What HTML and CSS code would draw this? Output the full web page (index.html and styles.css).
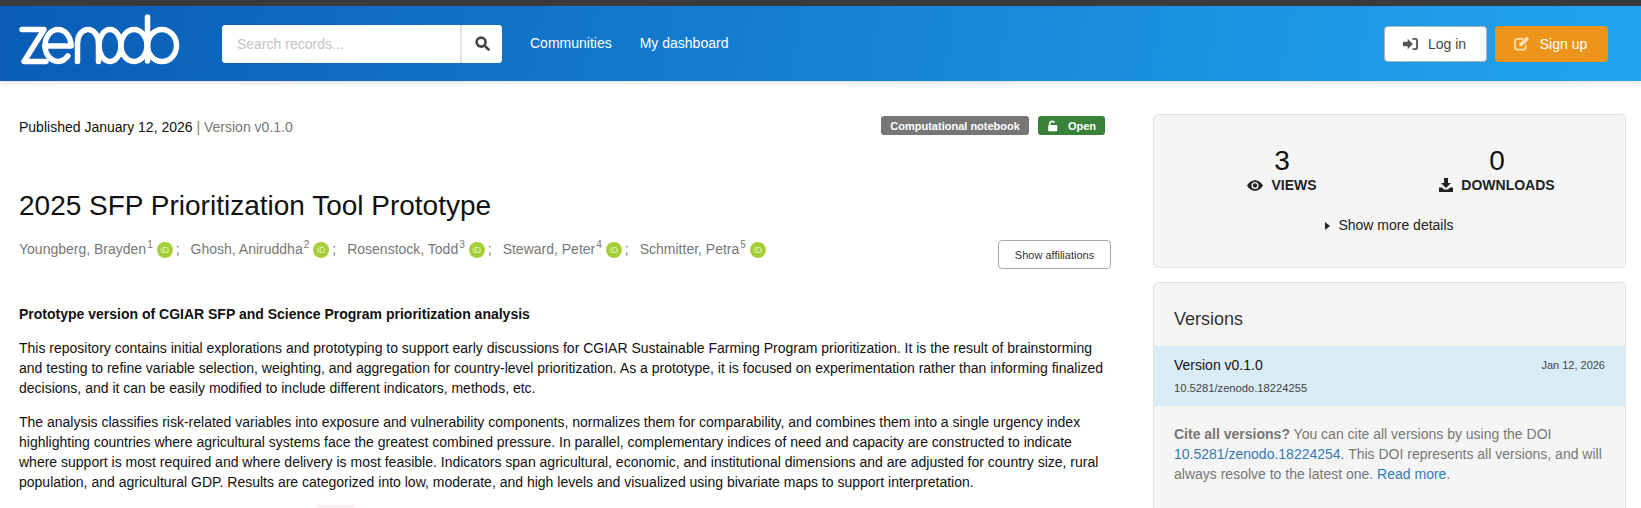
FILE: index.html
```html
<!DOCTYPE html>
<html>
<head>
    <title>2025 SFP Prioritization Tool Prototype</title>
    <link rel="stylesheet" href="styles.css">
</head>
<body>
    <header class="navbar">
        <svg class="logo" viewBox="16 12 168 56" fill="none" stroke="#fff" stroke-width="5.500" stroke-linecap="round" stroke-linejoin="round" aria-label="zenodo">
            <polyline points="22,28.500 44,28.500 24,60.500 46,60.500"/>
            <ellipse cx="58" cy="44.500" rx="13" ry="16" stroke-dasharray="0 11 80 0"/>
            <line x1="45" y1="45" x2="71" y2="45"/>
            <line x1="77.500" y1="42" x2="77.500" y2="60.500"/>
            <line x1="98.500" y1="42" x2="98.500" y2="60.500"/>
            <ellipse cx="88" cy="42" rx="10.500" ry="13.500" stroke-dasharray="0 38 38 0"/>
            <ellipse cx="110" cy="44.500" rx="11" ry="16"/>
            <ellipse cx="134" cy="44.500" rx="13" ry="16"/>
            <line x1="147.500" y1="16" x2="147.500" y2="60"/>
            <ellipse cx="162" cy="44.500" rx="14.500" ry="16"/>
        </svg>
        <form class="search">
            <input class="search-input" type="text" placeholder="Search records...">
            <button class="search-btn" type="button">
                <svg viewBox="0 0 16 16" width="15" height="15" fill="none" stroke="#444" stroke-width="2.800"><circle cx="6.500" cy="6.500" r="4.800"/><line x1="10.500" y1="10.500" x2="14.400" y2="14.400" stroke-linecap="round"/></svg>
            </button>
        </form>
        <nav class="nav-links">
            <a href="#">Communities</a>
            <a href="#">My dashboard</a>
        </nav>
        <div class="nav-right">
            <a class="btn btn-login" href="#">
                <svg viewBox="0 0 16 14" width="15" height="14" fill="#555"><path d="M0 4.500h5V1.500L10.500 7 5 12.500v-3H0z"/><path d="M10 .5h3a3 3 0 0 1 3 3v7a3 3 0 0 1-3 3h-3v-2h3a1 1 0 0 0 1-1v-7a1 1 0 0 0-1-1h-3z"/></svg>
                Log in
            </a>
            <a class="btn btn-signup" href="#">
                <svg viewBox="0 0 17 16" width="16" height="15" fill="none" stroke="#fde0b5" stroke-width="1.800"><path d="M12.500 9.500V12a2.500 2.500 0 0 1-2.500 2.500H3.500A2.500 2.500 0 0 1 1 12V5.500A2.500 2.500 0 0 1 3.500 3H10"/><path d="M5.500 11l.6-3.200L13.400.6l2.800 2.700-7.300 7.200z" fill="#fde0b5" stroke="none"/></svg>
                Sign up
            </a>
        </div>
    </header>

    <div class="page">
        <main class="record">
            <div class="record-top">
                <div class="published">Published January 12, 2026 <span class="muted">| Version v0.1.0</span></div>
                <div class="labels">
                    <span class="label label-grey">Computational notebook</span>
                    <span class="label label-green">
                        <svg viewBox="0 0 12 12" width="12" height="12" fill="#fff"><path d="M2 5V3.500a3.200 3.200 0 0 1 6.200-1l-1.600.5A1.600 1.600 0 0 0 3.600 3.500V5H9.500a.8.8 0 0 1 .8.8v4.600a.8.8 0 0 1-.8.8h-7.500a.8.8 0 0 1-.8-.8V5.800A.8.8 0 0 1 2 5z"/></svg>
                        Open
                    </span>
                </div>
            </div>
            <h1 class="title">2025 SFP Prioritization Tool Prototype</h1>
            <div class="creators-row">
                <div class="creators">
                    <span class="creator">Youngberg, Brayden<sup>1</sup><i class="orcid">iD</i>;</span>
                    <span class="creator">Ghosh, Aniruddha<sup>2</sup><i class="orcid">iD</i>;</span>
                    <span class="creator">Rosenstock, Todd<sup>3</sup><i class="orcid">iD</i>;</span>
                    <span class="creator">Steward, Peter<sup>4</sup><i class="orcid">iD</i>;</span>
                    <span class="creator">Schmitter, Petra<sup>5</sup><i class="orcid">iD</i></span>
                </div>
                <button class="btn-affil" type="button">Show affiliations</button>
            </div>
            <div class="description">
                <p><strong>Prototype version of CGIAR SFP and Science Program prioritization analysis</strong></p>
                <p>This repository contains initial explorations and prototyping to support early discussions for CGIAR Sustainable Farming Program prioritization. It is the result of brainstorming and testing to refine variable selection, weighting, and aggregation for country-level prioritization. As a prototype, it is focused on experimentation rather than informing finalized decisions, and it can be easily modified to include different indicators, methods, etc.</p>
                <p>The analysis classifies risk-related variables into exposure and vulnerability components, normalizes them for comparability, and combines them into a single urgency index highlighting countries where agricultural systems face the greatest combined pressure. In parallel, complementary indices of need and capacity are constructed to indicate where support is most required and where delivery is most feasible. Indicators span agricultural, economic, and institutional dimensions and are adjusted for country size, rural population, and agricultural GDP. Results are categorized into low, moderate, and high levels and visualized using bivariate maps to support interpretation.</p>
                <span class="code-chip"></span>
            </div>
        </main>

        <aside class="sidebar">
            <section class="well stats">
                <div class="stat-row">
                    <div class="stat">
                        <div class="stat-num">3</div>
                        <div class="stat-label">
                            <svg viewBox="0 0 18 12" width="16" height="11" fill="#222"><path fill-rule="evenodd" d="M9 0c4 0 7 2.500 9 6-2 3.500-5 6-9 6S2 9.500 0 6c2-3.500 5-6 9-6zm0 2a4 4 0 1 0 0 8 4 4 0 0 0 0-8z"/><circle cx="9" cy="6" r="2.400"/></svg>
                            VIEWS
                        </div>
                    </div>
                    <div class="stat">
                        <div class="stat-num">0</div>
                        <div class="stat-label">
                            <svg viewBox="0 0 14 14" width="14" height="14" fill="#222"><path d="M5 0h4v5h3L7 10 2 5h3z"/><path d="M0 9.500h3l2 2h4l2-2h3V14H0z"/></svg>
                            DOWNLOADS
                        </div>
                    </div>
                </div>
                <div class="more-details"><span class="caret"></span>Show more details</div>
            </section>
            <section class="well versions">
                <h2 class="versions-title">Versions</h2>
                <div class="version-row">
                    <div class="version-top">
                        <span class="version-name">Version v0.1.0</span>
                        <span class="version-date">Jan 12, 2026</span>
                    </div>
                    <div class="version-doi">10.5281/zenodo.18224255</div>
                </div>
                <p class="cite"><strong>Cite all versions?</strong> You can cite all versions by using the DOI <a href="#">10.5281/zenodo.18224254</a>. This DOI represents all versions, and will always resolve to the latest one. <a href="#">Read more</a>.</p>
            </section>
        </aside>
    </div>
</body>
</html>
```

FILE: styles.css
```css
html, body {
    height: 100%;
}

body {
    margin: 0;
    overflow: hidden;
    background: #fff;
    color: #111;
    font-family: "Liberation Sans", Arial, sans-serif;
    font-size: 14px;
    line-height: 20px;
}

a {
    text-decoration: none;
}

.navbar {
    display: flex;
    align-items: center;
    height: 75px;
    padding: 0 33px 0 16px;
    border-top: 6px solid #3a3a3a;
    background: linear-gradient(100deg, #0a5cb5, #22a5f0);
    box-shadow: 0 2px 5px rgba(0, 0, 0, 0.12);
}

.logo {
    width: 168px;
    height: 56px;
    flex: none;
    margin-top: -6px;
}

.search {
    display: flex;
    width: 280px;
    height: 38px;
    margin-left: 38px;
    border-radius: 4px;
    overflow: hidden;
    background: #fff;
}

.search-input {
    flex: 1;
    min-width: 0;
    padding: 0 15px;
    border: 0;
    font: 14px "Liberation Sans", Arial, sans-serif;
}

.search-input::placeholder {
    color: #c4c4c4;
}

.search-btn {
    display: flex;
    align-items: center;
    justify-content: center;
    width: 42px;
    padding: 0;
    border: 0;
    border-left: 2px solid #e2e2e2;
    background: #fff;
}

.nav-links {
    display: flex;
    gap: 28px;
    margin: -1px 0 0 28px;
}

.nav-links a {
    color: #fff;
}

.nav-right {
    display: flex;
    gap: 8px;
    margin-left: auto;
}

.btn {
    display: flex;
    align-items: center;
    justify-content: center;
    gap: 10px;
    height: 36px;
    padding-right: 2px;
    box-sizing: border-box;
    border-radius: 4px;
}

.btn-login {
    width: 103px;
    border: 1px solid #a9b4bf;
    background: #fff;
    color: #444;
}

.btn-signup {
    width: 113px;
    background: #ed951b;
    color: #fff;
}

.page {
    display: flex;
    gap: 42px;
    padding: 33px 15px 0 19px;
}

.record {
    width: 1092px;
    flex: none;
}

.record-top {
    display: flex;
    justify-content: space-between;
    padding: 0 6px 0 0;
}

.published {
    margin-top: 3px;
}

.muted {
    color: #777;
}

.labels {
    display: flex;
    gap: 9px;
    margin-top: 2px;
}

.label {
    display: flex;
    align-items: center;
    height: 19px;
    padding: 0 9px;
    border-radius: 3px;
    color: #fff;
    font-size: 11px;
    font-weight: bold;
}

.label-grey {
    background: #777;
}

.label-green {
    gap: 9px;
    background: #3a813a;
}

.title {
    margin: 51px 0 0;
    color: #111;
    font-size: 28px;
    font-weight: normal;
    line-height: 36px;
}

.creators-row {
    display: flex;
    justify-content: space-between;
    margin-top: 15px;
}

.creators {
    display: flex;
    gap: 11px;
    color: #777;
}

.creator sup {
    font-size: 10px;
    line-height: 0;
    margin: 0 2px 0 1px;
}

.orcid {
    display: inline-block;
    width: 16px;
    height: 16px;
    margin: 0 3px 0 2px;
    border-radius: 50%;
    background: #a6ce39;
    color: #e8f3c0;
    font-size: 9px;
    font-style: normal;
    line-height: 16px;
    text-align: center;
    vertical-align: middle;
}

.btn-affil {
    width: 113px;
    height: 29px;
    margin-top: 1px;
    border: 1px solid #aaa;
    border-radius: 4px;
    background: #fff;
    color: #333;
    font: 11px "Liberation Sans", Arial, sans-serif;
}

.description {
    margin-top: 35px;
}

.description p {
    margin: 0 0 14px;
}

.code-chip {
    display: block;
    width: 37px;
    height: 4px;
    margin: -1px 0 0 298px;
    background: #fdeef2;
}

.sidebar {
    width: 473px;
    flex: none;
}

.well {
    box-sizing: border-box;
    border: 1px solid #e3e3e3;
    border-radius: 4px;
    background: #f5f5f5;
}

.stats {
    height: 154px;
    padding-top: 31px;
}

.stat-row {
    display: grid;
    grid-template-columns: 215px 215px;
    justify-content: center;
}

.stat {
    text-align: center;
}

.stat-num {
    font-size: 28px;
    line-height: 29px;
}

.stat-label {
    display: flex;
    align-items: center;
    justify-content: center;
    gap: 8px;
    font-size: 14px;
    font-weight: bold;
    color: #222;
}

.more-details {
    margin-top: 20px;
    text-align: center;
    color: #222;
}

.caret {
    display: inline-block;
    margin-right: 8px;
    border-left: 5px solid #222;
    border-top: 4px solid transparent;
    border-bottom: 4px solid transparent;
}

.versions {
    height: 240px;
    margin-top: 14px;
}

.versions-title {
    margin: 0;
    padding: 25px 20px 15px;
    color: #333;
    font-size: 18px;
    font-weight: normal;
    line-height: 23px;
}

.version-row {
    height: 60px;
    box-sizing: border-box;
    padding: 9px 20px 0;
    background: #d9edf7;
}

.version-top {
    display: flex;
    align-items: center;
    justify-content: space-between;
}

.version-name {
    font-size: 14px;
}

.version-date {
    color: #444;
    font-size: 11px;
}

.version-doi {
    margin-top: 3px;
    color: #444;
    font-size: 11.200px;
}

.cite {
    margin: 18px 20px 0;
    color: #777;
}

.cite a {
    color: #337ab7;
}
```
